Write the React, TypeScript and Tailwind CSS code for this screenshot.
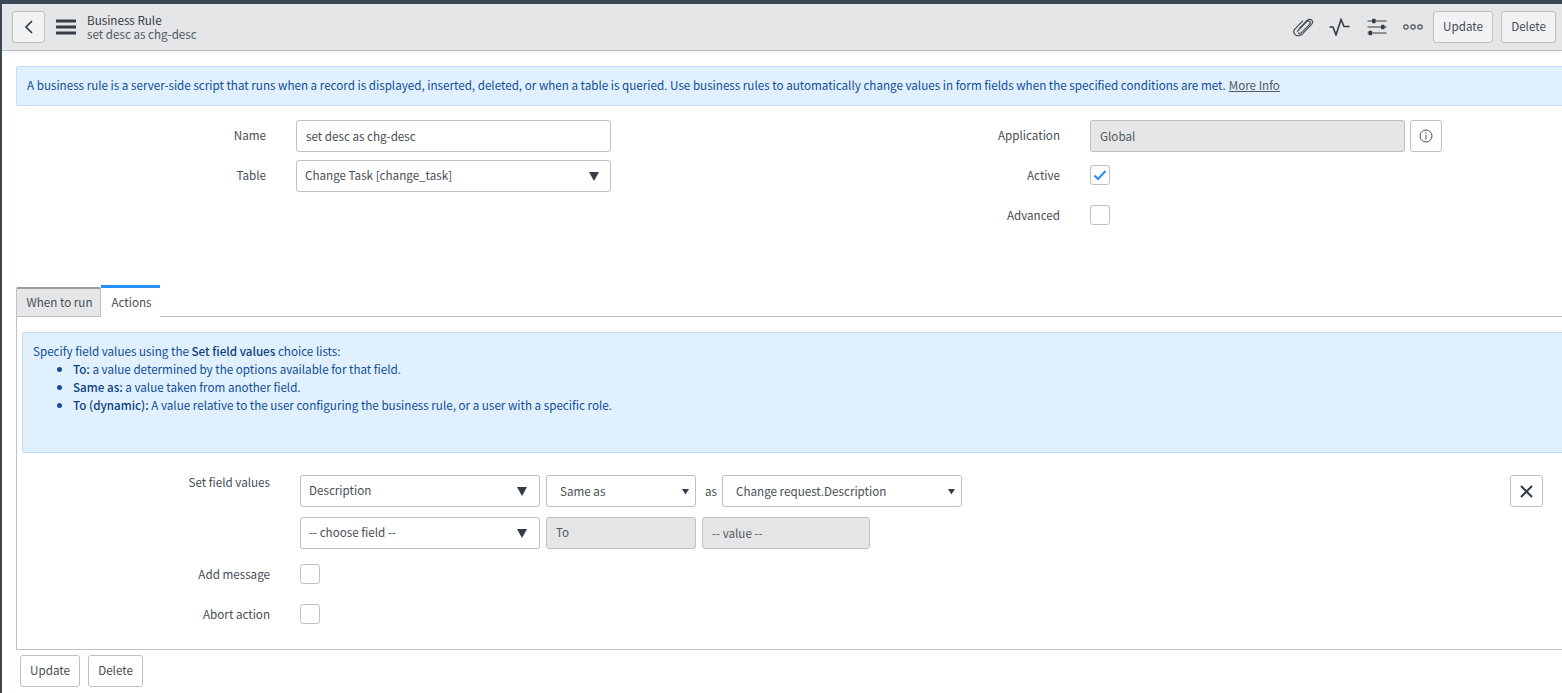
import React from 'react';

const font = 'font-["Noto_Sans_CJK_SC","Source_Sans_Pro","Lato",sans-serif]';

function Button({ label, className = '' }: { label: string; className?: string }) {
  return (
    <button className={`h-8 rounded-[3px] border border-[#bdc0c4] px-2 pb-[2px] text-[11.65px] leading-none text-[#474e56] ${className}`}>
      {label}
    </button>
  );
}

function Checkbox({ checked }: { checked?: boolean }) {
  return (
    <span className="flex h-5 w-5 items-center justify-center rounded-[3px] border border-[#bdc0c4] bg-white">
      {checked && (
        <svg width="14" height="12" viewBox="0 0 14 12" fill="none">
          <path d="M1.5 6.5 L5 10 L12.5 2" stroke="#278efc" strokeWidth="2" />
        </svg>
      )}
    </span>
  );
}

function SelectBox({
  label,
  className = '',
  small,
}: {
  label: string;
  className?: string;
  small?: boolean;
}) {
  return (
    <div className={`flex h-8 items-center justify-between rounded-[3px] border border-[#bdc0c4] bg-white text-[11.65px] text-[#474e56] ${className}`}>
      {small ? (
        <>
          <span>{label}</span>
          <svg width="7" height="7" viewBox="0 0 7 7"><path d="M0 1h7L3.5 6.5z" fill="#343d47" /></svg>
        </>
      ) : (
        <>
          <span className="pb-[2px]">{label}</span>
          <svg width="10" height="9" viewBox="0 0 10 9"><path d="M0 0h10L5 9z" fill="#343d47" /></svg>
        </>
      )}
    </div>
  );
}

function ReadOnly({ label, className = '' }: { label: string; className?: string }) {
  return (
    <div className={`flex h-8 items-center rounded-[3px] border border-[#bdc0c4] bg-[#e4e6e7] text-[11.65px] text-[#535a61] ${className}`}>
      {label}
    </div>
  );
}

function Header() {
  return (
    <div className="flex h-[47px] shrink-0 items-center border-b border-[#bdc0c4] bg-[#e4e6e7] pl-[10px] pr-[6px] shadow-[0_2px_3px_rgba(0,0,0,0.05)]">
      <button className="flex h-8 w-[33px] items-center justify-center rounded-[3px] border border-[#bdc0c4] bg-[#f1f2f4]">
        <svg width="10" height="14" viewBox="0 0 10 14" fill="none">
          <path d="M8 1 L2 7 L8 13" stroke="#343d47" strokeWidth="1.7" />
        </svg>
      </button>
      <svg className="ml-[11px]" width="20" height="16" viewBox="0 0 20 16" fill="#343d47">
        <rect y="0.5" width="20" height="3" rx="0.5" />
        <rect y="6.5" width="20" height="3" rx="0.5" />
        <rect y="12.5" width="20" height="3" rx="0.5" />
      </svg>
      <div className="ml-[11px] flex flex-col text-[11.65px] leading-[14px] text-[#343d47]">
        <span>Business Rule</span>
        <span className="text-[#535a61]">set desc as chg-desc</span>
      </div>
      <div className="ml-auto flex items-center text-[#343d47]">
        {/* attachments */}
        <svg width="22" height="20" viewBox="0 0 22 20" fill="none" stroke="#474e56" strokeWidth="1.2">
          <path d="M7 12 L15 3.5 C16.5 2 19 2 20 3.4 C21 4.8 20.6 6.2 19.6 7.4 L10 17.4 C8.6 18.8 5.6 19.3 3.6 18 C1.6 16.6 1 14.5 2.6 12.4 L11 3.6" />
          <path d="M5 14.6 L14.5 4.8 C15.6 3.8 17 3.8 17.8 4.6 C18.6 5.4 18.4 6.6 17.5 7.6 L8.6 16.4 C7.6 17.2 6.4 16.6 6.8 15.4" />
        </svg>
        {/* activity */}
        <svg className="ml-[15px]" width="21" height="18" viewBox="0 0 21 18" fill="none" stroke="#343d47" strokeWidth="1.6">
          <path d="M0.5 9 L4 9 L7 17 L12 1.5 L15 8.5 L20.5 8.5" />
        </svg>
        {/* personalize */}
        <svg className="ml-[17px]" width="20" height="20" viewBox="0 0 20 20" fill="none">
          <path d="M0.5 4 H19.5 M0.5 10 H19.5 M0.5 16 H19.5" stroke="#343d47" strokeWidth="1.1" />
          <rect x="5" y="1.8" width="3.6" height="4.4" rx="1" fill="#343d47" />
          <rect x="14" y="7.8" width="3.6" height="4.4" rx="1" fill="#343d47" />
          <rect x="1.5" y="13.8" width="3.6" height="4.4" rx="1" fill="#343d47" />
        </svg>
        {/* more */}
        <svg className="ml-4" width="20" height="6" viewBox="0 0 20 6" fill="none" stroke="#474e56" strokeWidth="1.2">
          <circle cx="3" cy="3" r="2.2" />
          <circle cx="10" cy="3" r="2.2" />
          <circle cx="17" cy="3" r="2.2" />
        </svg>
        <Button label="Update" className="ml-[10px] w-[60px] bg-[#f1f2f4]" />
        <Button label="Delete" className="ml-2 w-[55px] bg-[#f1f2f4]" />
      </div>
    </div>
  );
}

function FieldLabel({ text, className = '' }: { text: string; className?: string }) {
  return <div className={`text-right text-[11.65px] text-[#474e56] ${className}`}>{text}</div>;
}

function TopForm() {
  return (
    <div className="mt-[14px] flex h-[165px] shrink-0 items-start">
      <div className="grid w-[595px] grid-cols-[250px_315px] gap-x-[30px] gap-y-2">
        <FieldLabel text="Name" className="leading-[30px]" />
        <div className="flex h-8 items-center rounded-[3px] border border-[#bdc0c4] pl-[9px] text-[11.65px] text-[#474e56]">
          set desc as chg-desc
        </div>
        <FieldLabel text="Table" className="leading-[30px]" />
        <SelectBox label="Change Task [change_task]" className="pl-[8px] pr-[11px]" />
      </div>
      <div className="ml-[349px] grid grid-cols-[100px_352px] gap-x-[30px]">
        <FieldLabel text="Application" className="leading-[30px]" />
        <div className="flex items-center gap-[5px]">
          <ReadOnly label="Global" className="w-[315px] pl-[9px]" />
          <span className="flex h-8 w-8 items-center justify-center rounded-[3px] border border-[#bdc0c4]">
            <svg width="14" height="14" viewBox="0 0 14 14" fill="none" stroke="#474e56" strokeWidth="1">
              <circle cx="7" cy="7" r="6" />
              <path d="M7 6 V10.5 M7 3.4 V4.8" />
            </svg>
          </span>
        </div>
        <FieldLabel text="Active" className="mt-[9px] leading-[28px]" />
        <div className="mt-[13px] h-5"><Checkbox checked /></div>
        <FieldLabel text="Advanced" className="mt-3 leading-[28px]" />
        <div className="mt-4 h-6"><Checkbox /></div>
      </div>
    </div>
  );
}

function Tabs() {
  return (
    <div className="flex h-[32px] shrink-0 items-end border-b border-[#bdc0c4]">
      <div className="flex h-[29px] w-[85px] items-center justify-center rounded-t-[2px] border-x border-t-[2px] border-x-[#bdc0c4] border-t-[#9a9ea3] bg-[#e4e6e7] pb-[2px] pl-[2px] text-[11.65px] text-[#474e56]">
        When to run
      </div>
      <div className="relative -mb-px flex h-[32px] w-[59px] items-center justify-center border-t-[3px] border-t-[#278efc] bg-white pb-[2px] pl-[2px] text-[11.65px] text-[#474e56]">
        Actions
      </div>
    </div>
  );
}

function InfoBox() {
  return (
    <div className="ml-[5px] mt-[15px] h-[121px] rounded-l-[3px] border border-r-0 border-[#c2dcfb] bg-[#e1f0fe] pl-[10px] pt-[9px] text-[11.65px] leading-[18px] text-[#0f4d99]">
      <div>
        Specify field values using the <b className="font-medium text-[#0b3f82]">Set field values</b> choice lists:
      </div>
      <ul className="ml-10 list-disc">
        <li><b className="font-medium text-[#0b3f82]">To:</b> a value determined by the options available for that field.</li>
        <li><b className="font-medium text-[#0b3f82]">Same as:</b> a value taken from another field.</li>
        <li><b className="font-medium text-[#0b3f82]">To (dynamic):</b> A value relative to the user configuring the business rule, or a user with a specific role.</li>
      </ul>
    </div>
  );
}

function ActionsForm() {
  return (
    <div className="mt-[22px] flex items-start">
      <div className="w-[253px] shrink-0 text-right text-[11.65px] leading-[14px] text-[#474e56]">
        <div>Set field values</div>
        <div className="mt-[78px]">Add message</div>
        <div className="mt-[26px]">Abort action</div>
      </div>
      <div className="ml-[30px] flex flex-col">
        <div className="flex items-center gap-[6px]">
          <SelectBox label="Description" className="w-[240px] pl-2 pr-[12px]" />
          <SelectBox label="Same as" small className="w-[150px] pl-[13px] pr-[6px]" />
          <span className="ml-[3px] w-[11px] whitespace-nowrap text-[11.65px] text-[#474e56]">as</span>
          <SelectBox label="Change request.Description" small className="w-[240px] pl-[13px] pr-[6px]" />
          <button className="ml-[542px] flex h-8 w-[33px] shrink-0 items-center justify-center rounded-[3px] border border-[#bdc0c4]">
            <svg width="13" height="13" viewBox="0 0 13 13" fill="none" stroke="#343d47" strokeWidth="2">
              <path d="M1 1 L12 12 M12 1 L1 12" />
            </svg>
          </button>
        </div>
        <div className="mt-[10px] flex items-center gap-[6px]">
          <SelectBox label="-- choose field --" className="w-[240px] pl-2 pr-[12px]" />
          <ReadOnly label="To" className="w-[150px] pb-[2px] pl-[9px]" />
          <ReadOnly label="-- value --" className="w-[168px] pl-[9px]" />
        </div>
        <div className="mt-[15px]"><Checkbox /></div>
        <div className="mt-5"><Checkbox /></div>
      </div>
    </div>
  );
}

export default function App() {
  return (
    <div className={`flex h-[693px] w-full flex-col overflow-hidden border-l-2 border-t-[4px] border-[#3b4757] bg-white ${font}`}>
      <Header />
      <div className="flex min-h-0 flex-1 flex-col pl-[14px]">
        <div className="mt-[15px] flex h-10 shrink-0 items-center rounded-l-[3px] border border-r-0 border-[#c2dcfb] bg-[#e1f0fe] pb-[2px] pl-[10px] text-[11.65px] text-[#0f4d99]">
          <span>
            A business rule is a server-side script that runs when a record is displayed, inserted, deleted, or when a table is queried. Use business rules to automatically change values in form fields when the specified conditions are met.
          </span>
          <span className="ml-[3px] text-[#535a61] underline">More Info</span>
        </div>
        <TopForm />
        <Tabs />
        <div className="h-[333px] shrink-0 border-b border-l border-[#bdc0c4]">
          <InfoBox />
          <ActionsForm />
        </div>
        <div className="mt-[5px] flex gap-2 pl-[4px]">
          <Button label="Update" className="w-[60px]" />
          <Button label="Delete" className="w-[55px]" />
        </div>
      </div>
    </div>
  );
}
